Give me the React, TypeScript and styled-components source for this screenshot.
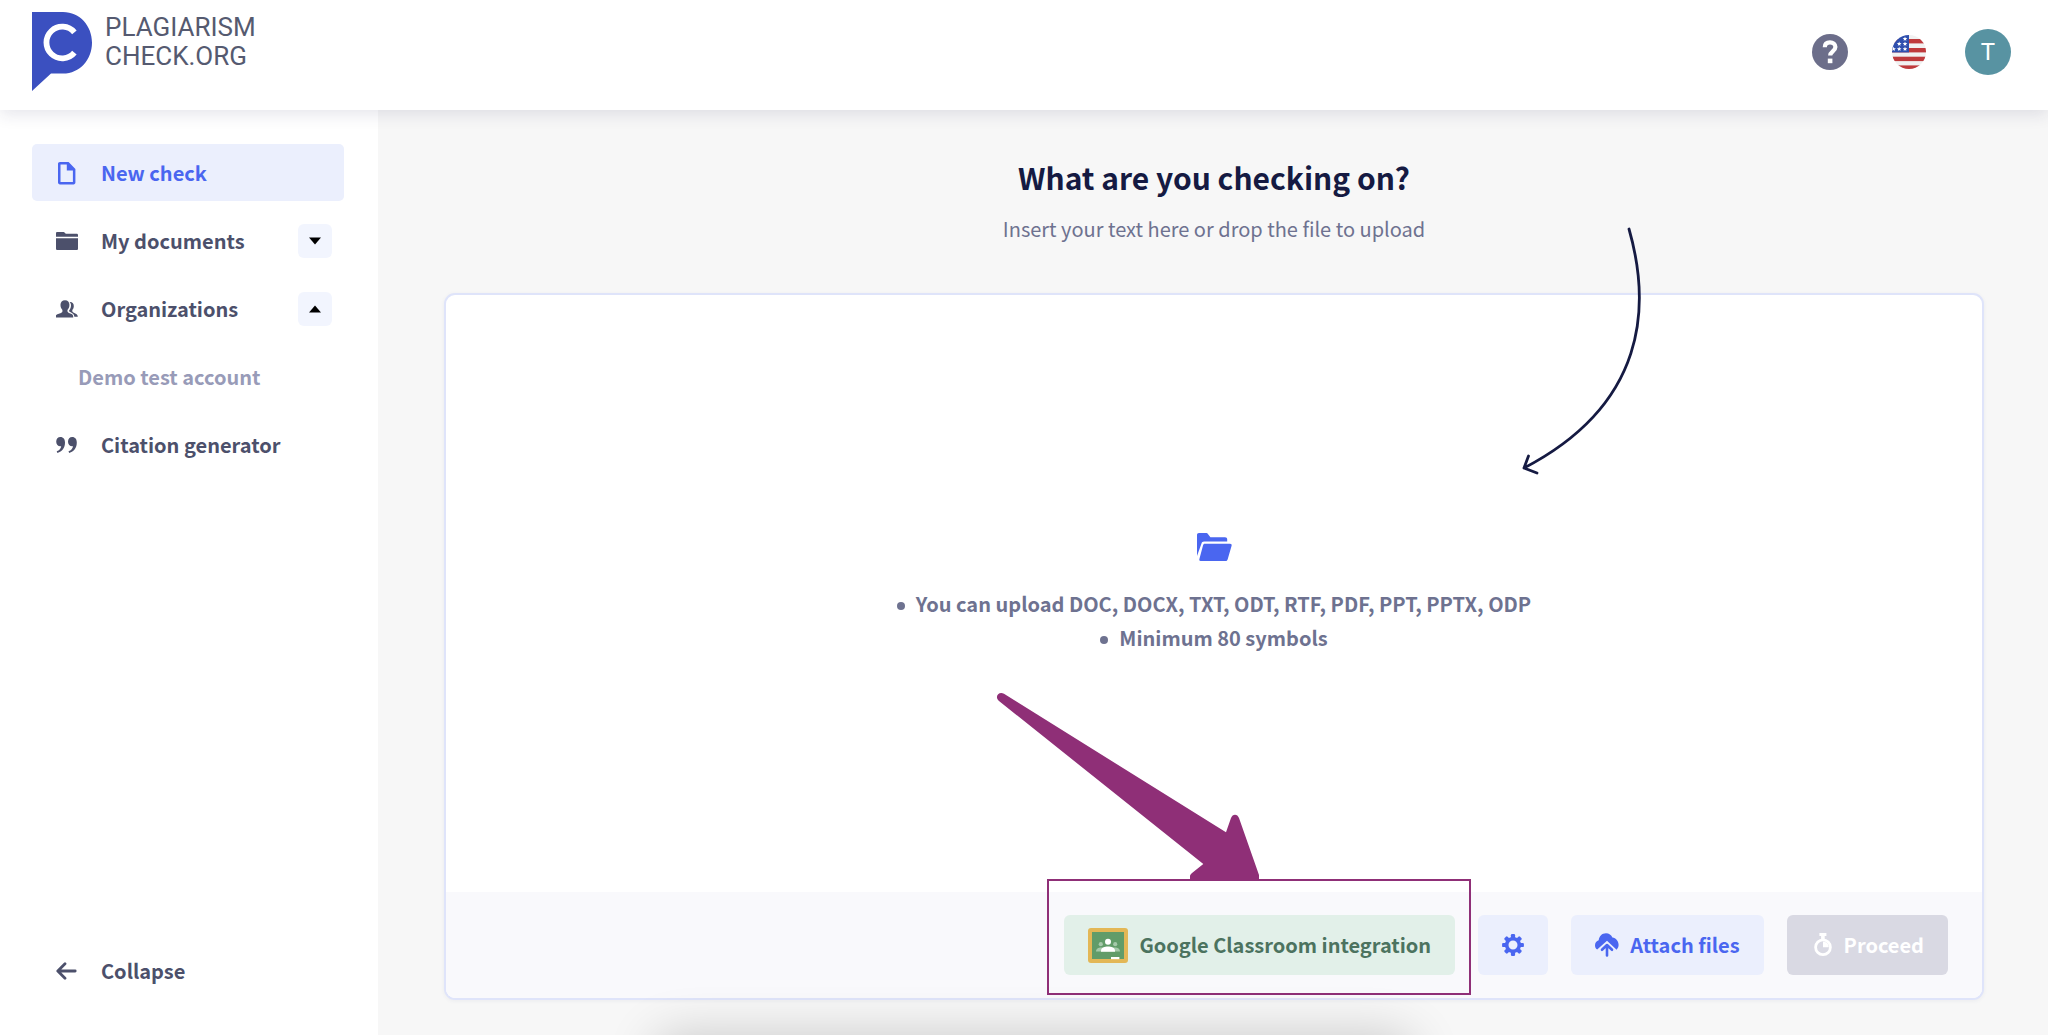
import React from 'react';
import styled, { createGlobalStyle } from 'styled-components';

const GlobalStyle = createGlobalStyle`
  *, *::before, *::after { box-sizing: border-box; }
  body {
    margin: 0;
    background: #f7f7f7;
    font-family: "Noto Sans CJK SC", "Noto Sans", sans-serif;
    font-size: 20px;
    line-height: 28px;
    color: #4c506b;
  }
  button { font: inherit; border: 0; margin: 0; padding: 0; background: none; cursor: pointer; }
  a { color: inherit; text-decoration: none; }
  ul { list-style: none; margin: 0; padding: 0; }
  svg { display: block; flex: none; }
`;

const Page = styled.div`
  display: flex;
  flex-direction: column;
  min-height: 100vh;
`;

const Header = styled.header`
  position: relative;
  z-index: 2;
  display: flex;
  justify-content: space-between;
  padding: 12px 37px 19px 32px;
  background: #fff;
  box-shadow: 0 4px 16px rgba(30, 35, 80, 0.12);
`;

const Logo = styled.a`
  display: flex;
  gap: 13px;
`;

const LogoText = styled.span`
  padding-top: 1px;
  font-family: Roboto, sans-serif;
  font-size: 26px;
  line-height: 29px;
  color: #555a70;
`;

const Actions = styled.div`
  display: flex;
  align-items: center;
  gap: 33px;
`;

const RoundButton = styled.button`
  display: grid;
  place-items: center;
  width: 46px;
  height: 46px;
  border-radius: 50%;
`;

const Avatar = styled(RoundButton)`
  background: #5893a2;
  color: #fff;
  font-family: Roboto, sans-serif;
  font-size: 24px;
`;

const Body = styled.div`
  display: flex;
  flex: 1;
`;

const Sidebar = styled.aside`
  display: flex;
  flex: none;
  flex-direction: column;
  justify-content: space-between;
  width: 378px;
  padding: 34px 34px 36px 32px;
  background: #fff;
`;

const NavList = styled.ul`
  display: flex;
  flex-direction: column;
  gap: 11px;
`;

const NavItem = styled.li<{ $active?: boolean }>`
  display: flex;
  align-items: center;
  height: 57px;
  padding: 0 12px 0 24px;
  border-radius: 5px;
  font-weight: 700;
  color: ${p => (p.$active ? '#4a66f0' : '#4c506b')};
  background: ${p => (p.$active ? '#ebeffd' : 'transparent')};
`;

const NavLink = styled.a`
  display: flex;
  flex: 1;
  align-items: center;
  gap: 23px;
`;

const SubItem = styled(NavItem)`
  padding-left: 46px;
  color: #989bb8;
`;

const Toggle = styled.button`
  display: grid;
  place-items: center;
  width: 34px;
  height: 34px;
  border-radius: 6px;
  background: #f2f5fe;
`;

const Collapse = styled.button`
  display: flex;
  align-items: center;
  gap: 23px;
  height: 57px;
  padding: 0 24px;
  font-weight: 700;
  color: #4c506b;
`;

const Main = styled.main`
  display: flex;
  flex: 1;
  flex-direction: column;
  padding: 47px 64px 35px 66px;
`;

const Intro = styled.div`
  position: relative;
  display: flex;
  flex-direction: column;
  align-items: center;
  gap: 18px;
  padding-bottom: 50px;
`;

const Title = styled.h1`
  margin: 0;
  font-size: 30px;
  line-height: 40px;
  font-weight: 700;
  color: #151a42;
`;

const Subtitle = styled.p`
  margin: 0;
  color: #6e7290;
`;

const HintArrow = styled.svg`
  position: absolute;
  z-index: 1;
  top: 67px;
  left: calc(50% + 306px);
  pointer-events: none;
`;

const Card = styled.section`
  display: flex;
  flex: 1;
  flex-direction: column;
  border: 2px solid #dfe4fa;
  border-radius: 11px;
  background: #fff;
  box-shadow: 0 1px 4px rgba(40, 50, 110, 0.06);
`;

const DropZone = styled.div`
  display: flex;
  flex: 1;
  flex-direction: column;
  align-items: center;
  justify-content: center;
  gap: 26px;
  padding: 48px;
`;

const Rules = styled.ul`
  display: flex;
  flex-direction: column;
  align-items: center;
  line-height: 34px;
  font-weight: 700;
  color: #6e7290;
`;

const Rule = styled.li`
  display: flex;
  align-items: center;
  gap: 11px;
  &::before {
    content: "";
    width: 8px;
    height: 8px;
    margin-top: 4px;
    border-radius: 50%;
    background: currentColor;
  }
`;

const Toolbar = styled.div`
  display: flex;
  justify-content: flex-end;
  gap: 23px;
  padding: 23px 34px;
  border-radius: 0 0 9px 9px;
  background: #f9f9fc;
`;

const tones = {
  green: { bg: '#e2f0e9', fg: '#4c735f' },
  blue: { bg: '#ebeffd', fg: '#4a66f0' },
  gray: { bg: '#d9d9e3', fg: '#ffffff' },
};

const ToolButton = styled.button<{ $tone: keyof typeof tones }>`
  display: flex;
  align-items: center;
  gap: 11px;
  height: 60px;
  padding: 0 24px;
  border-radius: 6px;
  font-weight: 700;
  white-space: nowrap;
  color: ${p => tones[p.$tone].fg};
  background: ${p => tones[p.$tone].bg};
`;

const Callout = styled.div`
  position: relative;
`;

const CalloutFrame = styled.span`
  position: absolute;
  inset: -36px -16px -20px -17px;
  border: 2px solid #8f2f77;
  pointer-events: none;
`;

const CalloutArrow = styled.svg`
  position: absolute;
  top: -226px;
  left: -74px;
  pointer-events: none;
`;

const DockShadow = styled.div`
  position: fixed;
  z-index: 1;
  bottom: -60px;
  left: 32%;
  width: 37%;
  height: 60px;
  border-radius: 20px;
  box-shadow: 0 0 50px rgba(0, 0, 0, 0.19);
  pointer-events: none;
`;

const LogoMark = () => (
  <svg width="60" height="79" viewBox="0 0 60 79" aria-hidden="true">
    <path d="M0 0H31C48 0 60 14 60 30.7S48 61.5 31 61.5H19L0 79Z" fill="#3b50c0" />
    <path d="M42.4 20.4A15.8 15.8 0 1 0 42.4 40.6" fill="none" stroke="#fff" strokeWidth="5.8" />
  </svg>
);

const HelpIcon = () => (
  <svg width="36" height="36" viewBox="0 0 36 36" aria-hidden="true">
    <circle cx="18" cy="18" r="18" fill="#6c6e8a" />
    <path d="M12.8 13.2C12.8 9.9 15 8.3 18 8.3s5.4 1.8 5.4 4.7c0 4.4-5.2 4.4-5.2 8.6" fill="none" stroke="#fff" strokeWidth="4.2" />
    <rect x="15.8" y="24.6" width="4.6" height="4.6" fill="#fff" />
  </svg>
);

const star = 'M0-2.4L.6-.8 2.3-.7 1 .4 1.4 2 0 1.1-1.4 2-1 .4-2.3-.7-.6-.8Z';
const FlagIcon = () => (
  <svg width="34" height="34" viewBox="0 0 34 34" aria-hidden="true">
    <defs><clipPath id="flagRound"><circle cx="17" cy="17" r="17" /></clipPath></defs>
    <g clipPath="url(#flagRound)">
      <rect width="34" height="34" fill="#f1f1f1" />
      {[4, 13, 21.7, 30.4].map(y => <rect key={y} y={y} width="34" height="4.4" fill="#bf3a3c" />)}
      <rect width="17" height="17.4" fill="#2f4fae" />
      {[[13, 3.8], [7.2, 8.8], [13, 8.8], [1.6, 14], [7.2, 14], [13, 14]].map(([x, y]) => (
        <path key={`${x}-${y}`} d={star} transform={`translate(${x} ${y})`} fill="#fff" />
      ))}
    </g>
  </svg>
);

const FileIcon = () => (
  <svg width="22" height="24" viewBox="0 0 22 24" aria-hidden="true">
    <path fillRule="evenodd" fill="currentColor" d="M4 1H12.6L19.4 8V21.6C19.4 22.7 18.7 23.4 17.6 23.4H4C2.8 23.4 2 22.7 2 21.6V2.8C2 1.7 2.8 1 4 1ZM4.5 3.6V20.9H16.9V9.4H10.8V3.6Z" />
  </svg>
);

const FolderIcon = () => (
  <svg width="22" height="18" viewBox="0 0 22 18" fill="currentColor" aria-hidden="true">
    <path d="M0 4.7V1.4C0 .5.5 0 1.4 0H7C8 0 8.4.3 9 1L9.8 1.8H20.4C21.4 1.8 22 2.3 22 3.2V4.7Z" />
    <path d="M0 6.2H22V16.4C22 17.4 21.5 18 20.4 18H1.6C.5 18 0 17.4 0 16.4Z" />
  </svg>
);

const UsersIcon = () => (
  <svg width="22" height="18" viewBox="0 0 22 18" fill="currentColor" aria-hidden="true">
    <path d="M9 .2C12 .2 13.6 2.3 13.4 5.2C13.3 7.2 12.7 8.6 11.6 9.7C11.2 11.3 11.5 12.2 13 12.9L15.6 14.1C16.8 14.8 17.2 15.8 17.3 17.6H-.6C-.5 15.8 0 14.9 1.4 14.3L5 12.9C6.5 12.2 6.7 11.3 6.3 9.7C5.2 8.6 4.6 7.2 4.5 5.2C4.3 2.3 6 .2 9 .2Z" />
    <path d="M13.6 2C16.4 1.8 17.9 3.6 17.8 6.2C17.7 8 17.1 9 16.4 9.8C16.1 11.2 16.4 12 17.4 12.6L20.2 14C21.3 14.7 21.7 15.4 21.8 16.8H18.4C18.1 14.7 17.2 13.5 15.5 12.7L13.7 11.8C13 11.3 13 10.8 13.2 10.3C14.4 8.9 15 7.2 15 5.3C15 4 14.5 2.9 13.6 2Z" />
  </svg>
);

const QuoteIcon = () => (
  <svg width="22" height="16" viewBox="0 0 22 16" fill="currentColor" aria-hidden="true">
    {[0, 11.8].map(x => (
      <path key={x} transform={`translate(${x})`} d="M4.4 0C7.4 0 9 2.2 9 5.6C9 10.8 6.2 14.8 1.4 16L.7 14.3C3.4 13.3 5 11.4 5.2 9.2C2.4 9.7.2 7.7.2 4.7C.2 1.9 1.9 0 4.4 0Z" />
    ))}
  </svg>
);

const BackIcon = () => (
  <svg width="22" height="18" viewBox="0 0 22 18" fill="none" stroke="currentColor" strokeWidth="2.8" strokeLinecap="round" strokeLinejoin="round" aria-hidden="true">
    <path d="M9 1.8L1.8 9L9 16.2M2 9H19.2" />
  </svg>
);

const Caret = ({ up }: { up?: boolean }) => (
  <svg width="12" height="8" viewBox="0 0 12 8" aria-hidden="true">
    <path d={up ? 'M0 7.5L6 .5L12 7.5Z' : 'M0 .5H12L6 7.5Z'} fill="#000" />
  </svg>
);

const OpenFolderIcon = () => (
  <svg width="35" height="28" viewBox="0 0 35 28" fill="#4a66f0" aria-hidden="true">
    <path d="M0 23V2C0 .7.7 0 2 0H8.6C10 0 10.6.5 11.3 1.4L13.4 4.2H28C29.4 4.2 30.2 5 30.2 6.2V8.6H7C5.6 8.6 4.9 9.3 4.5 10.4Z" />
    <path d="M7.8 10.8H33C34.3 10.8 35 11.6 34.6 12.8L30.7 26.2C30.3 27.5 29.6 28 28.4 28H3.6C2.5 28 2 27.3 2.4 26.1L6 12.4C6.3 11.3 6.8 10.8 7.8 10.8Z" />
  </svg>
);

const ClassroomIcon = () => (
  <svg width="40" height="35" viewBox="0 0 40 35" aria-hidden="true">
    <rect width="40" height="35" rx="3" fill="#e3b756" />
    <rect x="4" y="4" width="32" height="27" fill="#619c69" />
    <g fill="#a5c9aa">
      <circle cx="12.8" cy="16.2" r="2.1" />
      <circle cx="27.2" cy="16.2" r="2.1" />
      <path d="M8 23.5C8 20.8 10.4 19.6 13 19.6H27C29.6 19.6 32 20.8 32 23.5Z" />
    </g>
    <circle cx="20" cy="13.8" r="3" fill="#fff" />
    <path d="M13 23.7V22.5C13 19.8 16.6 18.4 20 18.4S27 19.8 27 22.5V23.7Z" fill="#fff" />
    <rect x="23" y="29" width="8.4" height="2.2" fill="#fff" />
  </svg>
);

const GearIcon = () => (
  <svg width="22" height="22" viewBox="-11 -11 22 22" fill="currentColor" aria-hidden="true">
    {[0, 45, 90, 135, 180, 225, 270, 315].map(a => (
      <rect key={a} x="-2.1" y="-10.9" width="4.2" height="5" rx="1.2" transform={`rotate(${a})`} />
    ))}
    <circle r="6.3" fill="none" stroke="currentColor" strokeWidth="3.6" />
  </svg>
);

const UploadIcon = () => (
  <svg width="24" height="24" viewBox="0 0 24 24" aria-hidden="true">
    <path fill="currentColor" d="M2.2 16.6C.6 15.4 0 14 0 12.2C0 9.8 1.6 7.9 3.7 7.2C4.2 3 7 .2 11 .2C14 .2 16.4 1.8 17.4 4.6C20.9 5.1 23.6 8.2 23.6 11.8C23.6 13.8 22.9 15.4 21.6 16.7L12 7.7Z" />
    <path fill="none" stroke="currentColor" strokeWidth="2.6" strokeLinecap="round" strokeLinejoin="round" d="M7 16.8L12 12L17 16.8M12 12.4V22.4" />
  </svg>
);

const StopwatchIcon = () => (
  <svg width="22" height="24" viewBox="-3 0 22 24" aria-hidden="true">
    <path d="M5.4 0H12.4V3H10.7V6H7.1V3H5.4Z" fill="currentColor" />
    <circle cx="9" cy="14.2" r="7.4" fill="none" stroke="currentColor" strokeWidth="2.8" />
    <path d="M9 8.4A5.8 5.8 0 0 1 14.8 14.2H9Z" fill="currentColor" />
  </svg>
);

export default function App() {
  return (
    <>
      <GlobalStyle />
      <Page>
        <Header>
          <Logo href="#">
            <LogoMark />
            <LogoText>PLAGIARISM<br />CHECK.ORG</LogoText>
          </Logo>
          <Actions>
            <RoundButton type="button" aria-label="Help"><HelpIcon /></RoundButton>
            <RoundButton type="button" aria-label="Language"><FlagIcon /></RoundButton>
            <Avatar type="button">T</Avatar>
          </Actions>
        </Header>
        <Body>
          <Sidebar>
            <nav>
              <NavList>
                <NavItem $active><NavLink href="#"><FileIcon />New check</NavLink></NavItem>
                <NavItem>
                  <NavLink href="#"><FolderIcon />My documents</NavLink>
                  <Toggle type="button" aria-label="Expand documents"><Caret /></Toggle>
                </NavItem>
                <NavItem>
                  <NavLink href="#"><UsersIcon />Organizations</NavLink>
                  <Toggle type="button" aria-label="Collapse organizations"><Caret up /></Toggle>
                </NavItem>
                <SubItem><NavLink href="#">Demo test account</NavLink></SubItem>
                <NavItem><NavLink href="#"><QuoteIcon />Citation generator</NavLink></NavItem>
              </NavList>
            </nav>
            <Collapse type="button"><BackIcon />Collapse</Collapse>
          </Sidebar>
          <Main>
            <Intro>
              <Title>What are you checking on?</Title>
              <Subtitle>Insert your text here or drop the file to upload</Subtitle>
              <HintArrow width="128" height="256" viewBox="0 0 128 256" fill="none" stroke="#151a42" strokeWidth="2.8" strokeLinecap="round" strokeLinejoin="round" aria-hidden="true">
                <path d="M109 5C131 82 127 180 4 244M8.5 232L4 244L17 249" />
              </HintArrow>
            </Intro>
            <Card>
              <DropZone>
                <OpenFolderIcon />
                <Rules>
                  <Rule>You can upload DOC, DOCX, TXT, ODT, RTF, PDF, PPT, PPTX, ODP</Rule>
                  <Rule>Minimum 80 symbols</Rule>
                </Rules>
              </DropZone>
              <Toolbar>
                <Callout>
                  <ToolButton type="button" $tone="green"><ClassroomIcon />Google Classroom integration</ToolButton>
                  <CalloutFrame />
                  <CalloutArrow width="280" height="192" viewBox="0 0 280 192" fill="#8f2f77" aria-hidden="true">
                    <path d="M14 4.8L236 143.3L241 129C242.5 124.5 247.500 124.5 249 129L269 186V192H200V187C200 186 201 185 202 184L213.3 175L9 12C4 7.5 9 2 14 4.8Z" />
                  </CalloutArrow>
                </Callout>
                <ToolButton type="button" $tone="blue" aria-label="Settings"><GearIcon /></ToolButton>
                <ToolButton type="button" $tone="blue"><UploadIcon />Attach files</ToolButton>
                <ToolButton type="button" $tone="gray"><StopwatchIcon />Proceed</ToolButton>
              </Toolbar>
            </Card>
          </Main>
        </Body>
        <DockShadow />
      </Page>
    </>
  );
}
